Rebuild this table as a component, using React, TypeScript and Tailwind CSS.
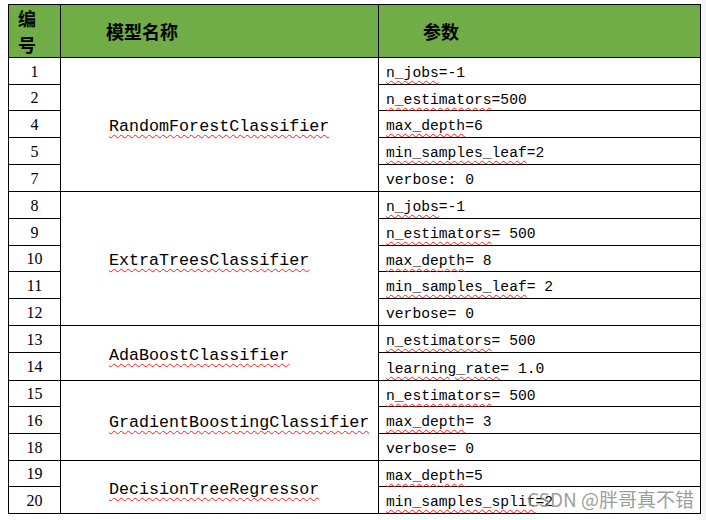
import React from "react";

type Param = { u?: string; r: string };
type Group = { name: string; rows: { n: number; p: Param }[] };

const groups: Group[] = [
  {
    name: "RandomForestClassifier",
    rows: [
      { n: 1, p: { u: "n_jobs", r: "=-1" } },
      { n: 2, p: { u: "n_estimators", r: "=500" } },
      { n: 4, p: { u: "max_depth", r: "=6" } },
      { n: 5, p: { u: "min_samples_leaf", r: "=2" } },
      { n: 7, p: { r: "verbose: 0" } },
    ],
  },
  {
    name: "ExtraTreesClassifier",
    rows: [
      { n: 8, p: { u: "n_jobs", r: "=-1" } },
      { n: 9, p: { u: "n_estimators", r: "= 500" } },
      { n: 10, p: { u: "max_depth", r: "= 8" } },
      { n: 11, p: { u: "min_samples_leaf", r: "= 2" } },
      { n: 12, p: { r: "verbose= 0" } },
    ],
  },
  {
    name: "AdaBoostClassifier",
    rows: [
      { n: 13, p: { u: "n_estimators", r: "= 500" } },
      { n: 14, p: { u: "learning_rate", r: "= 1.0" } },
    ],
  },
  {
    name: "GradientBoostingClassifier",
    rows: [
      { n: 15, p: { u: "n_estimators", r: "= 500" } },
      { n: 16, p: { u: "max_depth", r: "= 3" } },
      { n: 18, p: { r: "verbose= 0" } },
    ],
  },
  {
    name: "DecisionTreeRegressor",
    rows: [
      { n: 19, p: { u: "max_depth", r: "=5" } },
      { n: 20, p: { u: "min_samples_split", r: "=2" } },
    ],
  },
];

const spanClass: Record<number, string> = {
  2: "row-span-2",
  3: "row-span-3",
  5: "row-span-5",
};

const wavy =
  "underline decoration-wavy decoration-[#ff1a1a] decoration-1 underline-offset-[3px]";

export default function App() {
  const cells: React.ReactNode[] = [];
  groups.forEach((g, gi) => {
    g.rows.forEach((row, ri) => {
      cells.push(
        <div
          key={`n-${gi}-${ri}`}
          className="col-start-1 flex items-center justify-center border-r border-b border-black pt-[1px] font-['Liberation_Serif',serif] text-[16px] text-black"
        >
          {row.n}
        </div>
      );
      if (ri === 0) {
        cells.push(
          <div
            key={`m-${gi}`}
            className={`col-start-2 ${spanClass[g.rows.length]} flex items-center border-r border-b border-black pl-[48px] pt-[5px] font-['Liberation_Mono',monospace] text-[16.7px] text-black`}
          >
            <span className={wavy}>{g.name}</span>
          </div>
        );
      }
      cells.push(
        <div
          key={`p-${gi}-${ri}`}
          className="col-start-3 flex items-center whitespace-pre border-r border-b border-black pl-[7px] pt-[4px] font-['Liberation_Mono',monospace] text-[14.67px] text-black"
        >
          {row.p.u && <span className={wavy}>{row.p.u}</span>}
          <span>{row.p.r}</span>
        </div>
      );
    });
  });

  return (
    <div className="relative flex h-[520px] w-[706px] bg-white">
      <div className="h-full w-[702px] bg-white pl-[8px] pt-[4px]">
        <div className="grid w-[693px] grid-cols-[52px_318px_322px] grid-rows-[53px_27px_26px_27px_27px_27px_27px_27px_26px_27px_27px_27px_28px_26px_27px_27px_26px_27px] border-l border-t border-black">
          <div className="col-start-1 flex flex-col justify-center border-r border-b border-black bg-[#70ad47] pl-[9px] font-['Noto_Sans_CJK_SC',sans-serif] text-[18px] font-bold leading-[26px] text-black">
            <span>编</span>
            <span>号</span>
          </div>
          <div className="col-start-2 flex items-center border-r border-b border-black bg-[#70ad47] pl-[45px] font-['Noto_Sans_CJK_SC',sans-serif] text-[18px] font-bold text-black">
            模型名称
          </div>
          <div className="col-start-3 flex items-center border-r border-b border-black bg-[#70ad47] pl-[44px] font-['Noto_Sans_CJK_SC',sans-serif] text-[18px] font-bold text-black">
            参数
          </div>
          {cells}
        </div>
      </div>
      <div className="h-full flex-1 bg-[#f4f4f4]" />
      <div className="absolute left-[527px] top-[485px] whitespace-nowrap font-['Noto_Sans_CJK_SC','Liberation_Sans',sans-serif] text-[19px] leading-[28px] text-[#8a8a8a]/85">
        CSDN @胖哥真不错
      </div>
    </div>
  );
}
